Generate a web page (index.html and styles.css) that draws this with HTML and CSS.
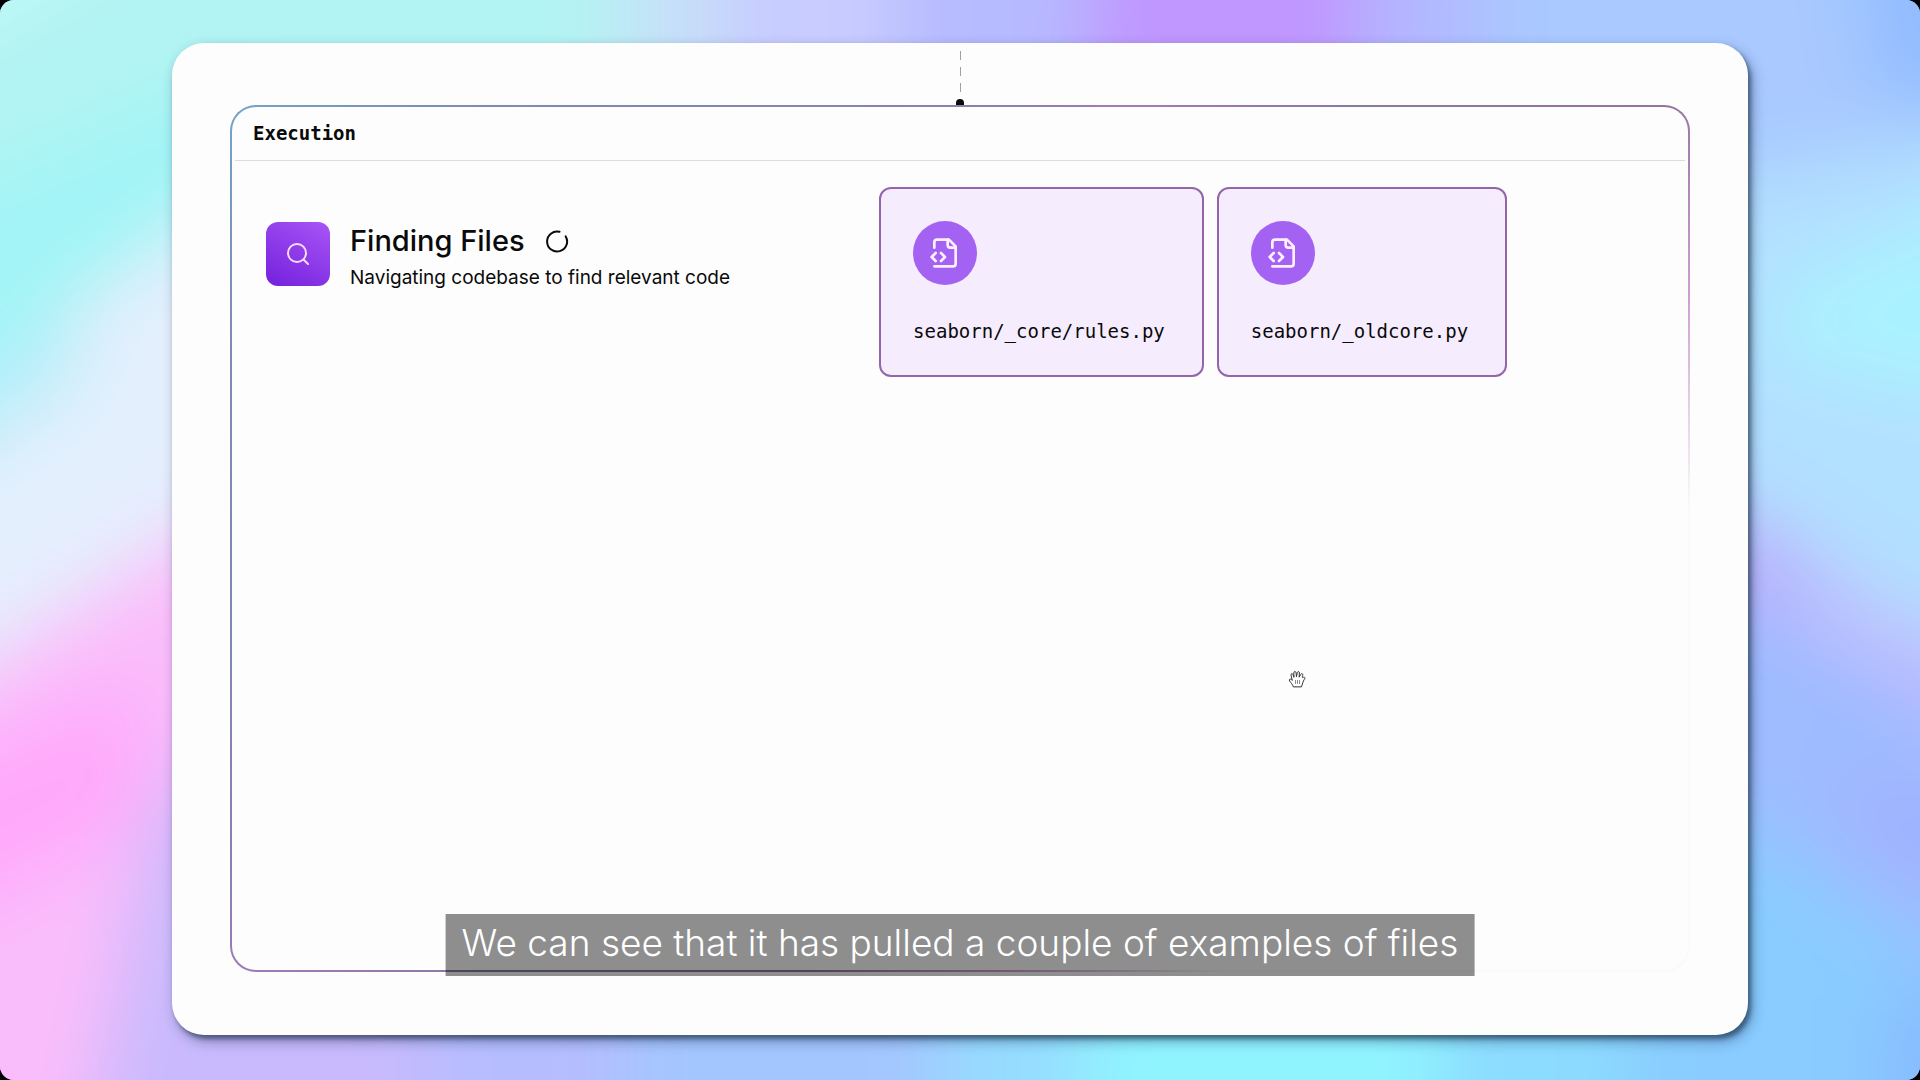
FILE: index.html
```html
<!DOCTYPE html>
<html lang="en">
<head>
    <meta charset="UTF-8">
    <meta name="viewport" content="width=device-width, initial-scale=1.0">
    <title>Execution</title>
    <link rel="stylesheet" href="styles.css">
</head>
<body>
    <div class="stage">
        <svg class="backdrop" viewBox="0 0 1920 1080" preserveAspectRatio="none" aria-hidden="true">
            <defs>
                <filter id="soft" x="-20%" y="-20%" width="140%" height="140%">
                    <feGaussianBlur stdDeviation="36"/>
                </filter>
            </defs>
            <rect width="1920" height="1080" fill="#b8c4ff"/>
            <g filter="url(#soft)">
                <!-- left side -->
                <path d="M-200-200H640V300H-200z" fill="#b2f4f3"/>
                <path d="M-200-200H330L-200 110z" fill="#ccfafb"/>
                <path d="M-200 260L260 60V210L-200 520z" fill="#a2f4f6"/>
                <path d="M-200 500L300 150V500L-200 780z" fill="#e4effd"/>
                <path d="M-200 480L80 310V380L-200 580z" fill="#b8eefb"/>
                <path d="M-200 780L300 460V1280H-200z" fill="#fabdfb"/>
                <path d="M-200 820L140 680V820L-200 1000z" fill="#ffa8fb"/>
                <path d="M300 640L150 820L70 1200H700V640z" fill="#c9bafd"/>
                <!-- top strip -->
                <path d="M620-200H720V200H620z" fill="#c6e0f8"/>
                <path d="M720-200H900V200H720z" fill="#c8ccff"/>
                <path d="M900-200H1090V200H900z" fill="#b6baff"/>
                <path d="M1100-200H1390L1360 200H1080z" fill="#c096ff"/>
                <path d="M1370-200H1500V200H1350z" fill="#b2b8ff"/>
                <!-- bottom strip -->
                <path d="M420 900H640V1280H420z" fill="#b6bdff"/>
                <path d="M620 900H960V1280H620z" fill="#a4c6ff"/>
                <path d="M940 900H1120V1280H940z" fill="#96dcff"/>
                <path d="M1100 900H1440V1280H1060z" fill="#90f4ff"/>
                <path d="M1440 900H1700V1280H1440z" fill="#8cdcff"/>
                <!-- right side -->
                <path d="M1480-200H2120V200H1480z" fill="#a9c9ff"/>
                <path d="M1840-200H2120V100H1880z" fill="#90bcff"/>
                <path d="M1660 190L2120 110V740L1660 480z" fill="#b2e0ff"/>
                <path d="M1780 290L2120 130V440L1780 360z" fill="#aaf2ff"/>
                <path d="M1660 470L1760 520L2120 760V900L1660 620z" fill="#bab0fd"/>
                <path d="M1800 570L2120 690V790L1800 620z" fill="#bec2ff"/>
                <path d="M1660 590L1780 620L2120 830V1280H1660z" fill="#9ebcff"/>
                <path d="M1840 760L2120 850V980L1860 860z" fill="#a0b2ff"/>
                <path d="M1660 780L1800 860L2120 1080V1280H1600z" fill="#8accff"/>
                <path d="M1880 1000L2120 940V1280H1880z" fill="#88bcff"/>
            </g>
        </svg>

        <main class="window">
            <div class="connector"><span class="connector-dot"></span></div>

            <section class="panel">
                <header class="panel-header">
                    <h1>Execution</h1>
                </header>
                <div class="panel-body">
                    <div class="step">
                        <div class="step-icon">
                            <svg viewBox="0 0 24 24" width="24" height="24">
                                <circle cx="11" cy="11" r="9"/>
                                <path d="M17.5 17.5L22 22"/>
                            </svg>
                        </div>
                        <div class="step-text">
                            <div class="step-title">
                                <h2>Finding Files</h2>
                                <svg class="spinner" viewBox="0 0 24 24" width="24" height="24">
                                    <path d="M14.5 2.8A10 10 0 1 0 20.7 7.4"/>
                                </svg>
                            </div>
                            <p>Navigating codebase to find relevant code</p>
                        </div>
                    </div>
                    <div class="files">
                        <article class="file">
                            <div class="file-icon">
                                <svg viewBox="0 0 24 24" width="32" height="32">
                                    <path d="M4 22h14a2 2 0 0 0 2-2V7l-5-5H6a2 2 0 0 0-2 2v4"/>
                                    <path d="M14 2v4a2 2 0 0 0 2 2h4"/>
                                    <path d="M5 12l-3 3 3 3"/>
                                    <path d="M9 18l3-3-3-3"/>
                                </svg>
                            </div>
                            <p>seaborn/_core/rules.py</p>
                        </article>
                        <article class="file">
                            <div class="file-icon">
                                <svg viewBox="0 0 24 24" width="32" height="32">
                                    <path d="M4 22h14a2 2 0 0 0 2-2V7l-5-5H6a2 2 0 0 0-2 2v4"/>
                                    <path d="M14 2v4a2 2 0 0 0 2 2h4"/>
                                    <path d="M5 12l-3 3 3 3"/>
                                    <path d="M9 18l3-3-3-3"/>
                                </svg>
                            </div>
                            <p>seaborn/_oldcore.py</p>
                        </article>
                    </div>
                </div>
            </section>
        </main>

        <!-- open hand pointer -->
        <svg class="cursor" viewBox="0 0 18 18" width="18" height="18" aria-hidden="true">
            <path d="M5.2 16.5C4.6 14.5 3 12.8 1.6 11C.6 9.5 2.2 8.4 3.5 9.7L4.3 10.4L3 5.2C2.6 3.5 4.5 3 5 4.6L5.9 7.3L5.8 2.8C5.8 1.1 8 1.1 8.1 2.8L8.4 6.8L9.3 2.6C9.7 1 11.6 1.4 11.4 3L11.1 7.2L12.8 4.3C13.7 2.9 15.3 3.9 14.7 5.4C13.9 7.3 14.2 8 15.5 7.3C17 6.8 17.3 8.2 16.4 9.3C14.9 11.2 14.5 14.2 13.6 16.5z"/>
            <path class="cursor-lines" d="M7.5 10.5v3M9.5 10.5v3M11.5 10.5v3"/>
        </svg>

        <p class="caption">We can see that it has pulled a couple of examples of files</p>
    </div>
</body>
</html>
```

FILE: styles.css
```css
* {
    box-sizing: border-box;
}

body {
    margin: 0;
    background: #000;
    color: #0a0a0a;
    font-family: Inter, sans-serif;
}

h1, h2, p {
    margin: 0;
}

svg {
    display: block;
    fill: none;
    stroke-linecap: round;
    stroke-linejoin: round;
}

.stage {
    position: relative;
    display: flex;
    min-height: 100vh;
    padding: 43px 172px 45px;
    border-radius: 14px;
    overflow: hidden;
}

.backdrop {
    position: absolute;
    inset: 0;
    width: 100%;
    height: 100%;
}

/* White window */
.window {
    position: relative;
    flex: 1;
    display: flex;
    flex-direction: column;
    padding: 8px 58px 63px;
    border-radius: 32px;
    background: #fdfdfd;
    box-shadow: 3px 4px 4px rgba(20, 40, 60, 0.5), 4px 6px 14px rgba(20, 40, 80, 0.4);
}

/* Dashed line that runs into the panel */
.connector {
    display: flex;
    justify-content: center;
    align-items: flex-end;
    height: 54px;
    background: repeating-linear-gradient(#a0a0a0 0 9px, transparent 9px 16px) center / 1px 100% no-repeat;
}

.connector-dot {
    width: 8px;
    height: 6px;
    border-radius: 4px 4px 0 0;
    background: #0a0a0a;
}

/* Execution panel */
.panel {
    flex: 1;
    border: 2px solid transparent;
    border-radius: 26px;
    background:
        linear-gradient(#fdfdfd, #fdfdfd) padding-box,
        linear-gradient(135deg, #74a4c6 0%, #7f8bb4 10%, #8682b0 32%, #a27ab6 39%, #8a7aa2 48%, #94749e 62%, #cf9fd2 71%, #fafafa 80%) border-box;
}

.panel-header {
    margin: 0 3px;
    padding: 14px 18px 15px;
    border-bottom: 1px solid #dcdcdc;
}

.panel-header h1 {
    font: bold 19px/24px "DejaVu Sans Mono", monospace;
}

.panel-body {
    display: grid;
    grid-template-columns: 4fr 5fr;
    padding-top: 26px;
}

.step {
    display: flex;
    align-items: flex-start;
    gap: 20px;
    padding: 35px 0 0 34px;
}

.step-icon {
    display: grid;
    place-items: center;
    width: 64px;
    height: 64px;
    border-radius: 12px;
    background: linear-gradient(210deg, #a855f7, #7320dc);
}

.step-icon svg {
    stroke: #fbdcff;
    stroke-width: 2;
}

.step-title {
    display: flex;
    align-items: center;
    gap: 20px;
}

.step-title h2 {
    font-size: 29px;
    font-weight: 500;
    line-height: 38px;
}

.spinner {
    stroke: #0a0a0a;
    stroke-width: 2;
}

.step-text p {
    font-size: 19px;
    line-height: 36px;
}

.files {
    display: flex;
    align-items: flex-start;
    gap: 13px;
}

.file {
    padding: 32px 37px 32px 32px;
    border: 2px solid #9565ac;
    border-radius: 12px;
    background: #f5edfe;
}

.file-icon {
    display: grid;
    place-items: center;
    width: 64px;
    height: 64px;
    margin-bottom: 34px;
    border-radius: 50%;
    background: #a462f2;
}

.file-icon svg {
    stroke: #fff0ff;
    stroke-width: 2;
}

.file p {
    font: 19px/24px "DejaVu Sans Mono", monospace;
}

.cursor {
    position: absolute;
    right: 32%;
    top: 62%;
    fill: #fff;
    stroke: #333;
    stroke-width: 1;
}

.cursor-lines {
    stroke: #888;
}

/* Subtitle over the window */
.caption {
    position: absolute;
    left: 50%;
    bottom: 104px;
    transform: translateX(-50%);
    padding: 4px 16px 8px;
    background: rgba(0, 0, 0, 0.44);
    color: #fff;
    font-size: 37px;
    font-weight: 300;
    line-height: 50px;
    white-space: nowrap;
}
```
